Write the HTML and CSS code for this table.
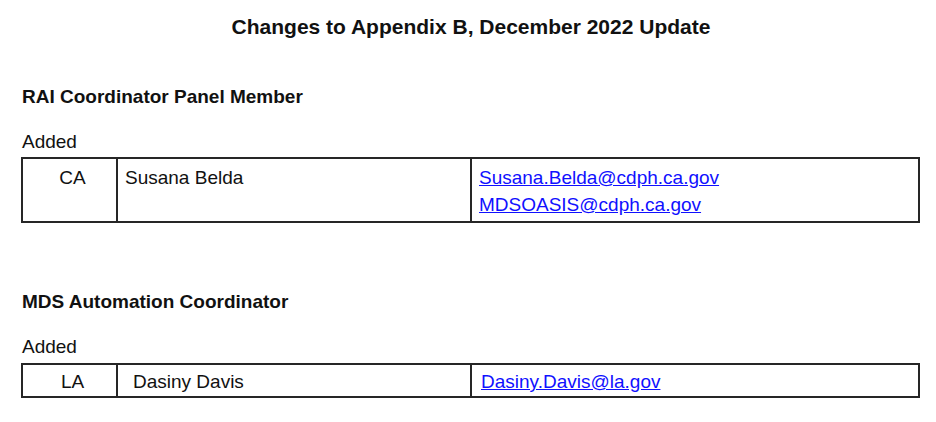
FILE: index.html
```html
<!DOCTYPE html>
<html>
<head>
<meta charset="utf-8">
<link rel="stylesheet" href="styles.css">
</head>
<body>
<div class="page">
  <h1 class="title">Changes to Appendix B, December 2022 Update</h1>

  <h2 class="heading heading-first">RAI Coordinator Panel Member</h2>
  <p class="label">Added</p>
  <table class="list list-one">
    <colgroup><col class="c1"><col class="c2"><col class="c3"></colgroup>
    <tr>
      <td class="state">CA</td>
      <td class="name">Susana Belda</td>
      <td class="mail"><a href="#">Susana.Belda@cdph.ca.gov</a><br><a href="#">MDSOASIS@cdph.ca.gov</a></td>
    </tr>
  </table>

  <h2 class="heading heading-second">MDS Automation Coordinator</h2>
  <p class="label">Added</p>
  <table class="list list-two">
    <colgroup><col class="c1"><col class="c2"><col class="c3"></colgroup>
    <tr>
      <td class="state">LA</td>
      <td class="name name-wide">Dasiny Davis</td>
      <td class="mail mail-wide"><a href="#">Dasiny.Davis@la.gov</a></td>
    </tr>
  </table>
</div>
</body>
</html>
```

FILE: styles.css
```css
html, body {
  margin: 0;
  padding: 0;
  background: #ffffff;
}
body {
  font-family: "Liberation Sans", Arial, sans-serif;
  color: #111111;
}
.page {
  width: 898px;
  padding: 15px 0 0 22px;
}
.title {
  margin: 0;
  font-size: 21px;
  line-height: 24px;
  font-weight: bold;
  text-align: center;
}
.heading {
  margin: 0;
  font-size: 19px;
  line-height: 22px;
  font-weight: bold;
}
.heading-first {
  margin-top: 47px;
}
.heading-second {
  margin-top: 68px;
}
.label {
  margin: 23px 0 0 0;
  font-size: 19px;
  line-height: 22px;
}
.list {
  margin: 4px 0 0 -1px;
  width: 897px;
  border-collapse: collapse;
  table-layout: fixed;
  font-size: 19px;
}
.c1 { width: 95px; }
.c2 { width: 354px; }
.c3 { width: 448px; }
.list td {
  border: 2px solid #262626;
  vertical-align: top;
  line-height: 27px;
}
.list-one td {
  padding: 5px 6px 3px 7px;
}
.list-two {
  margin-top: 5px;
}
.list-two td {
  padding: 3px 6px 1px 7px;
}
.list td.state {
  text-align: center;
  padding-left: 12px;
  padding-right: 6px;
}
.name-wide {
  padding-left: 15px !important;
}
.mail-wide {
  padding-left: 9px !important;
}
.mail a {
  color: #1010ff;
  text-decoration: underline;
}
```
